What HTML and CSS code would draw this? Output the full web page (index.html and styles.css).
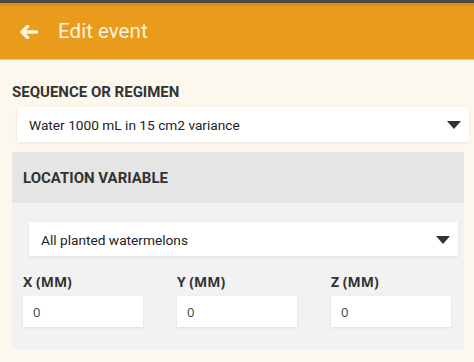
FILE: index.html
```html
<!DOCTYPE html>
<html>
<head>
<meta charset="utf-8">
<link rel="stylesheet" href="styles.css">
</head>
<body>
<div class="statusbar"></div>
<header class="appbar">
  <svg class="back" width="18" height="14" viewBox="0 0 18 14">
    <path d="M7.5 1.5 L2 7 L7.5 12.5 M2.5 7 H16.5" fill="none" stroke="#fdf3de" stroke-width="3.4" stroke-linecap="round" stroke-linejoin="round"/>
  </svg>
  <h1 class="title">Edit event</h1>
</header>
<main class="content">
  <div class="field-label">SEQUENCE OR REGIMEN</div>
  <div class="select select-main">
    <span class="select-text">Water 1000 mL in 15 cm2 variance</span>
    <span class="caret"></span>
  </div>
  <section class="panel">
    <div class="panel-head">LOCATION VARIABLE</div>
    <div class="panel-body">
      <div class="select select-inner">
        <span class="select-text">All planted watermelons</span>
        <span class="caret"></span>
      </div>
      <div class="coords">
        <div class="coord">
          <div class="coord-label">X (MM)</div>
          <div class="input">0</div>
        </div>
        <div class="coord">
          <div class="coord-label">Y (MM)</div>
          <div class="input">0</div>
        </div>
        <div class="coord">
          <div class="coord-label">Z (MM)</div>
          <div class="input">0</div>
        </div>
      </div>
    </div>
  </section>
</main>
</body>
</html>
```
FILE: styles.css
```css
* { box-sizing: border-box; }
html, body { margin: 0; padding: 0; }
body {
  width: 474px;
  height: 362px;
  overflow: hidden;
  background: #fdf8ee;
  font-family: Roboto, "Liberation Sans", sans-serif;
  color: #222;
}
.statusbar {
  height: 3px;
  background: #4b4944;
}
.appbar {
  height: 57px;
  background: linear-gradient(#d68c15 0px, #e99b1b 5px, #e99b1b 100%);
  border-bottom: 1px solid #f3c57a;
  display: flex;
  align-items: center;
  padding-left: 20px;
}
.back { display: block; margin-top: 1px; }
.title {
  margin: 0 0 0 20px;
  font-weight: 400;
  font-size: 20.6px;
  color: #fdf3de;
}
.content {
  padding: 24px 10px 0 12px;
}
.field-label {
  font-weight: 700;
  font-size: 15px;
  line-height: 16px;
  color: #333;
}
.select {
  display: flex;
  align-items: center;
  justify-content: space-between;
  background: #fff;
  box-shadow: 0 1px 3px rgba(0,0,0,0.08);
  font-size: 13.7px;
  line-height: 16px;
  color: #222;
}
.select-main {
  height: 35px;
  margin: 7px -5px 0 5px;
  padding: 1px 8px 0 12px;
}
.select-inner {
  height: 34px;
  margin: 0 -5px 0 6px;
  padding: 1px 8px 0 12px;
}
.caret {
  width: 0;
  height: 0;
  border-left: 7px solid transparent;
  border-right: 7px solid transparent;
  border-top: 8px solid #333;
}
.panel {
  margin-top: 10px;
}
.panel-head {
  height: 51px;
  background: #e5e5e5;
  display: flex;
  align-items: center;
  padding: 1px 0 0 11px;
  font-weight: 700;
  font-size: 15px;
  line-height: 16px;
  color: #333;
}
.panel-body {
  background: #f2f2f2;
  padding: 19px 11px 23px 11px;
}
.coords {
  display: grid;
  grid-template-columns: 122px 122px 122px;
  column-gap: 32px;
  margin-top: 16px;
}
.coord-label {
  font-family: "Open Sans", "Liberation Sans", sans-serif;
  font-weight: 700;
  font-size: 14px;
  line-height: 19px;
  color: #333;
}
.input {
  margin-top: 5px;
  width: 120px;
  height: 31px;
  background: #fff;
  box-shadow: 0 1px 3px rgba(0,0,0,0.08);
  font-family: "Open Sans", "Liberation Sans", sans-serif;
  font-size: 13px;
  color: #444;
  display: flex;
  align-items: center;
  padding-left: 10px;
}
```
